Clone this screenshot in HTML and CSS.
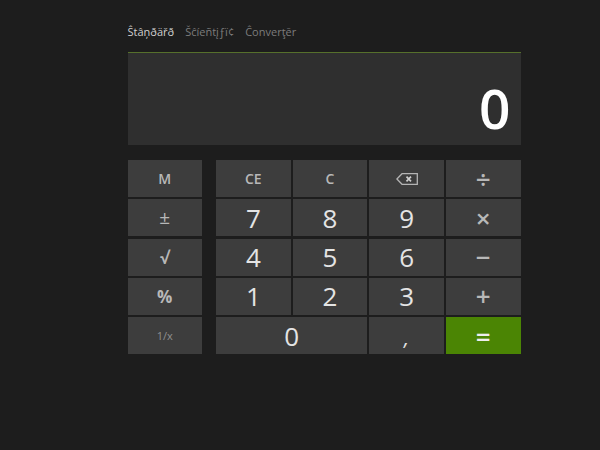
FILE: index.html
```html
<!DOCTYPE html>
<html lang="en">
<head>
    <meta charset="UTF-8">
    <title>Calculator</title>
    <link rel="stylesheet" href="styles.css">
</head>
<body>
    <div class="calc">
        <nav class="tabs">
            <a href="#" class="tab active">Ŝtâņðäřð</a>
            <a href="#" class="tab">Šĉíeñtįƒï¢</a>
            <a href="#" class="tab">Ĉonvеrţēr</a>
        </nav>

        <div class="display">0</div>

        <div class="pad">
            <div class="memory">
                <button class="key small">M</button>
                <button class="key sign">±</button>
                <button class="key small bold">√</button>
                <button class="key small bold">%</button>
                <button class="key tiny">1/x</button>
            </div>

            <div class="keys">
                <button class="key small">CE</button>
                <button class="key small">C</button>
                <button class="key" aria-label="Backspace">
                    <svg class="back" viewBox="0 0 22 12" width="22" height="12">
                        <path d="M6 .7H21.3V11.3H6L.9 6Z" fill="none" stroke="#b4b4b4" stroke-width="1.3"/>
                        <path d="M10.5 3.6 15 8.4M15 3.6 10.5 8.4" fill="none" stroke="#d0d0d0" stroke-width="1.6"/>
                    </svg>
                </button>
                <button class="key op">÷</button>

                <button class="key num">7</button>
                <button class="key num">8</button>
                <button class="key num">9</button>
                <button class="key op">×</button>

                <button class="key num">4</button>
                <button class="key num">5</button>
                <button class="key num">6</button>
                <button class="key op">−</button>

                <button class="key num">1</button>
                <button class="key num">2</button>
                <button class="key num">3</button>
                <button class="key op">+</button>

                <button class="key num wide">0</button>
                <button class="key num comma">,</button>
                <button class="key op equals">=</button>
            </div>
        </div>
    </div>
</body>
</html>
```

FILE: styles.css
```css
* {
    box-sizing: border-box;
}

body {
    margin: 0;
    height: 450px;
    overflow: hidden;
    background: #1d1d1d;
    font-family: "Open Sans", "Noto Sans", sans-serif;
}

.calc {
    width: 393px;
    margin-left: 127.5px;
    padding-top: 23px;
}

.tabs {
    display: flex;
    gap: 11px;
    height: 29px;
    font-size: 11px;
    line-height: 18px;
}

.tab {
    color: #7c7c7c;
    text-decoration: none;
}

.tab.active {
    color: #cfcfcf;
}

.display {
    height: 93px;
    padding: 15px 10px 0 0;
    border-top: 1.5px solid #56702c;
    background: #2f2f2f;
    color: #fff;
    font-size: 55px;
    font-weight: 600;
    line-height: 80px;
    text-align: right;
}

.pad {
    display: flex;
    gap: 14px;
    margin-top: 15px;
}

.memory,
.keys {
    display: grid;
    grid-auto-rows: 37px;
    row-gap: 2.25px;
}

.memory {
    width: 74.5px;
}

.keys {
    flex: 1;
    grid-template-columns: repeat(4, 1fr);
    column-gap: 2px;
}

.key {
    display: flex;
    align-items: center;
    justify-content: center;
    padding: 0;
    border: 0;
    background: #3d3d3d;
    color: #b8b8b8;
    font-family: inherit;
    font-size: 22px;
    line-height: 1;
}

.small {
    font-size: 14px;
    font-weight: 600;
}

.sign {
    font-size: 19px;
}

.bold {
    font-size: 17px;
    font-weight: 700;
}

.tiny {
    color: #8f8f8f;
    font-size: 11px;
}

.num {
    color: #e4e4e4;
    font-size: 26px;
    font-weight: 400;
}

.op {
    font-size: 26px;
    font-weight: 600;
}

.wide {
    grid-column: span 2;
}

.comma {
    align-items: flex-end;
    padding-bottom: 6px;
    font-size: 20px;
    font-style: italic;
}

.equals {
    background: #4b8504;
    color: #eee;
}
```
